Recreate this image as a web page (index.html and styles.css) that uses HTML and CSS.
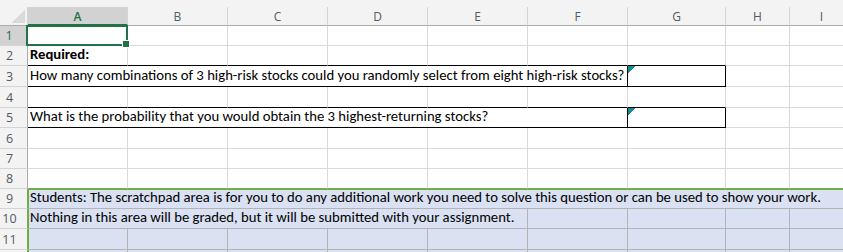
FILE: index.html
```html
<!DOCTYPE html>
<html>
<head>
<meta charset="utf-8">
<link rel="stylesheet" href="styles.css">
</head>
<body>
<div class="sheet">
  <div class="strip"></div>

  <div class="corner"><span class="tri-corner"></span></div>
  <div class="ch ch-sel">A</div>
  <div class="ch">B</div>
  <div class="ch">C</div>
  <div class="ch">D</div>
  <div class="ch">E</div>
  <div class="ch">F</div>
  <div class="ch">G</div>
  <div class="ch">H</div>
  <div class="ch">I</div>

  <div class="rh rh-sel">1</div>
  <div class="c sel"></div>
  <div class="c"></div><div class="c"></div><div class="c"></div><div class="c"></div><div class="c"></div><div class="c"></div><div class="c"></div><div class="c"></div>

  <div class="rh">2</div>
  <div class="c kb b">Required:</div>
  <div class="c kb"></div><div class="c kb"></div><div class="c kb"></div><div class="c kb"></div><div class="c kb"></div><div class="c kb"></div>
  <div class="c"></div><div class="c"></div>

  <div class="rh">3</div>
  <div class="c kb kr span6">How many combinations of 3 high-risk stocks could you randomly select from eight high-risk stocks?</div>
  <div class="c kb kr flag"></div>
  <div class="c"></div><div class="c"></div>

  <div class="rh">4</div>
  <div class="c kb"></div><div class="c kb"></div><div class="c kb"></div><div class="c kb"></div><div class="c kb"></div><div class="c kb"></div><div class="c kb"></div>
  <div class="c"></div><div class="c"></div>

  <div class="rh">5</div>
  <div class="c kb kr span6">What is the probability that you would obtain the 3 highest-returning stocks?</div>
  <div class="c kb kr flag"></div>
  <div class="c"></div><div class="c"></div>

  <div class="rh">6</div>
  <div class="c"></div><div class="c"></div><div class="c"></div><div class="c"></div><div class="c"></div><div class="c"></div><div class="c"></div><div class="c"></div><div class="c"></div>

  <div class="rh">7</div>
  <div class="c"></div><div class="c"></div><div class="c"></div><div class="c"></div><div class="c"></div><div class="c"></div><div class="c"></div><div class="c"></div><div class="c"></div>

  <div class="rh">8</div>
  <div class="c gb"></div><div class="c gb"></div><div class="c gb"></div><div class="c gb"></div><div class="c gb"></div><div class="c gb"></div><div class="c gb"></div><div class="c gb"></div><div class="c gb"></div>

  <div class="rh rh-g">9</div>
  <div class="c blue gt gl span9">Students: The scratchpad area is for you to do any additional work you need to solve this question or can be used to show your work.</div>

  <div class="rh rh-g">10</div>
  <div class="c blue gl span5">Nothing in this area will be graded, but it will be submitted with your assignment.</div>
  <div class="c blue"></div><div class="c blue"></div><div class="c blue"></div><div class="c blue"></div>

  <div class="rh rh-g">11</div>
  <div class="c blue gl"></div><div class="c blue"></div><div class="c blue"></div><div class="c blue"></div><div class="c blue"></div><div class="c blue"></div><div class="c blue"></div><div class="c blue"></div><div class="c blue"></div>

  <div class="rh rh-g"></div>
  <div class="c blue gl"></div><div class="c blue"></div><div class="c blue"></div><div class="c blue"></div><div class="c blue"></div><div class="c blue"></div><div class="c blue"></div><div class="c blue"></div><div class="c blue"></div>
</div>
</body>
</html>
```

FILE: styles.css
```css
* { box-sizing: border-box; }
html, body {
  margin: 0;
  padding: 0;
  background: #ffffff;
  overflow: hidden;
  width: 843px;
  height: 252px;
}
.sheet {
  display: grid;
  grid-template-columns: 28px 100px 100px 100px 100px 100px 100px 98px 64px 64px;
  grid-template-rows: 7px 19px 20px 20px 21px 21px 20px 21px 20px 20px 20px 20px 21px 20px;
  width: 882px;
  font-family: "Carlito", "Lato", "Liberation Sans", sans-serif;
  font-size: 14.7px;
  color: #000;
}
.strip {
  grid-column: 1 / -1;
  background: #f3f3f3;
}
.corner {
  background: #f3f3f3;
  border-right: 1px solid #d4d4d4;
  border-bottom: 1px solid #ababab;
  display: flex;
  justify-content: flex-end;
  align-items: flex-end;
  padding: 0 2px 2px 0;
}
.tri-corner {
  width: 14px;
  height: 14px;
  background: linear-gradient(135deg, transparent 50%, #dadada 50%);
}
.ch {
  background: #f3f3f3;
  border-right: 1px solid #d4d4d4;
  border-bottom: 1px solid #ababab;
  font-family: "Open Sans", "Noto Sans", sans-serif;
  font-size: 12px;
  color: #505a64;
  display: flex;
  justify-content: center;
  align-items: center;
  padding-top: 1px;
}
.ch-sel {
  background: #d2d2d2;
  color: #217346;
  font-weight: 600;
  border-bottom: 2px solid #217346;
}
.rh {
  background: #f3f3f3;
  border-right: 1px solid #ababab;
  border-bottom: 1px solid #d4d4d4;
  font-family: "Open Sans", "Noto Sans", sans-serif;
  font-size: 12.5px;
  color: #505a64;
  display: flex;
  justify-content: center;
  align-items: center;
  padding-right: 8px;
}
.rh-sel {
  background: #d2d2d2;
  color: #217346;
  border-right: 2px solid #217346;
}
.rh-g {
  border-right: 1px solid #70ad47;
}
.c {
  border-right: 1px solid #d9d9d9;
  border-bottom: 1px solid #d9d9d9;
  white-space: nowrap;
  padding: 0 0 3px 2px;
  display: flex;
  align-items: flex-end;
  line-height: 15px;
  min-width: 0;
}
.b { font-weight: 700; }
.kb { border-bottom-color: #000; }
.kr { border-right-color: #000; }
.span5 { grid-column: span 5; }
.span6 { grid-column: span 6; }
.span9 { grid-column: span 9; }
.sel { position: relative; }
.sel::after {
  content: "";
  position: absolute;
  top: -1px;
  left: -2px;
  right: -1px;
  bottom: -1px;
  border: 2px solid #217346;
}
.sel::before {
  content: "";
  position: absolute;
  right: -3px;
  bottom: -3px;
  width: 6px;
  height: 6px;
  background: #217346;
  border: 1px solid #fff;
  z-index: 2;
}
.flag {
  background: linear-gradient(135deg, #168c93 0 50%, transparent 50%) top left / 8px 8px no-repeat;
}
.gb { border-bottom-color: #70ad47; }
.blue {
  background: #d9e1f2;
  border-right-color: #b4b4b4;
  border-bottom-color: #b4b4b4;
}
.gt { border-top: 1px solid #70ad47; }
.gl { border-left: 1px solid #70ad47; padding-left: 1px; }
```
